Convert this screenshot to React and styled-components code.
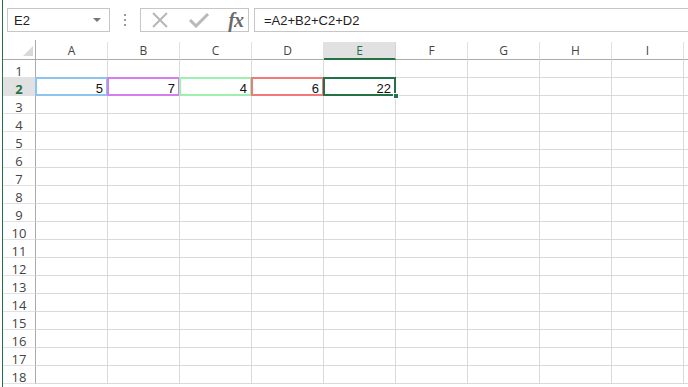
import React from 'react';
import styled, { createGlobalStyle } from 'styled-components';

const GlobalStyle = createGlobalStyle`
  html, body {
    margin: 0;
    padding: 0;
    background: #ffffff;
    overflow: hidden;
  }
  * {
    box-sizing: border-box;
  }
`;

// last column is only partly visible, so its letter stays hidden
const COLS = ['A', 'B', 'C', 'D', 'E', 'F', 'G', 'H', 'I', ''];
const ROWS = Array.from({ length: 18 }, (_, i) => i + 1);

const VALUES = {
  A2: { value: '5', ref: '#8cc4f0' },
  B2: { value: '7', ref: '#d67ef0' },
  C2: { value: '4', ref: '#9ef0ae' },
  D2: { value: '6', ref: '#f07a7a' },
  E2: { value: '22', active: true },
};

const App = () => {
  return (
    <>
      <GlobalStyle />
      <Sheet>
        <FormulaBar>
          <NameBox>
            <span>E2</span>
            <Caret />
          </NameBox>
          <Grip>
            <i />
            <i />
            <i />
          </Grip>
          <ActionBox>
            <svg width="20" height="16" viewBox="0 0 20 16">
              <path d="M3 1 L17 15 M17 1 L3 15" stroke="#b9b9b9" strokeWidth="2.2" fill="none" />
            </svg>
            <svg width="22" height="16" viewBox="0 0 22 16">
              <path d="M2 8 L8 14 L20 2" stroke="#b9b9b9" strokeWidth="3" fill="none" />
            </svg>
            <Fx>fx</Fx>
          </ActionBox>
          <FormulaInput>=A2+B2+C2+D2</FormulaInput>
        </FormulaBar>

        <Grid>
          <Corner>
            <svg width="10" height="10" viewBox="0 0 10 10">
              <polygon points="10,0 10,10 0,10" fill="#d9d9d9" />
            </svg>
          </Corner>
          {COLS.map((c, i) => (
            <ColHead key={i} $active={c === 'E'}>
              {c}
            </ColHead>
          ))}
          {ROWS.map((r) => (
            <React.Fragment key={r}>
              <RowHead $active={r === 2}>{r}</RowHead>
              {COLS.map((c, i) => {
                const cell = c ? VALUES[`${c}${r}`] : null;
                return (
                  <Cell key={i} $ref={cell && cell.ref} $active={cell && cell.active}>
                    {cell ? cell.value : ''}
                    {cell && cell.active && <FillHandle />}
                  </Cell>
                );
              })}
            </React.Fragment>
          ))}
        </Grid>
      </Sheet>
    </>
  );
};

const Sheet = styled.div`
  width: 688px;
  height: 387px;
  margin-left: 2px;
  border-left: 1px solid #217346;
  overflow: hidden;
  font-family: 'Liberation Sans', Arial, sans-serif;
`;

const FormulaBar = styled.div`
  display: flex;
  align-items: flex-start;
  height: 40px;
  padding: 8px 0 0 4px;
`;

const NameBox = styled.div`
  width: 103px;
  height: 24px;
  border: 1px solid #c6c6c6;
  display: flex;
  align-items: center;
  justify-content: space-between;
  padding: 0 8px 0 6px;
  font-size: 13px;
  color: #222;
`;

const Caret = styled.span`
  width: 0;
  height: 0;
  border-left: 4px solid transparent;
  border-right: 4px solid transparent;
  border-top: 4px solid #777;
`;

const Grip = styled.div`
  width: 30px;
  height: 24px;
  display: flex;
  flex-direction: column;
  align-items: center;
  justify-content: center;
  gap: 3px;
  i {
    width: 2px;
    height: 2px;
    background: #9a9a9a;
  }
`;

const ActionBox = styled.div`
  width: 109px;
  height: 24px;
  border: 1px solid #c6c6c6;
  display: flex;
  align-items: center;
  justify-content: space-between;
  padding: 0 5px 0 9px;
`;

const Fx = styled.span`
  font-family: 'Liberation Serif', 'Times New Roman', serif;
  font-style: italic;
  font-weight: 700;
  font-size: 20px;
  color: #6a6a6a;
  letter-spacing: -1px;
  line-height: 1;
`;

const FormulaInput = styled.div`
  flex: 1;
  margin-left: 5px;
  height: 24px;
  border: 1px solid #c6c6c6;
  border-right: none;
  display: flex;
  align-items: center;
  padding-left: 9px;
  font-size: 13px;
  color: #222;
`;

const Grid = styled.div`
  display: grid;
  grid-template-columns: 33px repeat(10, 72px);
  grid-template-rows: 20px repeat(18, 18px);
`;

const Corner = styled.div`
  border-right: 1px solid #ababab;
  border-bottom: 1px solid #ababab;
  display: flex;
  align-items: flex-end;
  justify-content: flex-end;
  padding: 0 2px 3px 0;
`;

const ColHead = styled.div`
  display: flex;
  align-items: center;
  justify-content: center;
  font-family: 'Open Sans', 'Liberation Sans', sans-serif;
  font-size: 12px;
  color: ${(p) => (p.$active ? '#217346' : '#444')};
  background: ${(p) => (p.$active ? '#e1e1e1' : '#fff')};
  border-right: 1px solid ${(p) => (p.$active ? '#d4d4d4' : '#e1e1e1')};
  border-bottom: ${(p) => (p.$active ? '2px solid #217346' : '1px solid #ababab')};
  margin-top: 2px;
`;

const RowHead = styled.div`
  display: flex;
  align-items: center;
  justify-content: center;
  padding-top: 4px;
  font-family: 'Open Sans', 'Liberation Sans', sans-serif;
  font-size: 13px;
  font-weight: ${(p) => (p.$active ? 700 : 400)};
  color: ${(p) => (p.$active ? '#217346' : '#444')};
  background: ${(p) => (p.$active ? '#e1e1e1' : '#fff')};
  border-right: 1px solid #ababab;
  border-bottom: 1px solid #e1e1e1;
`;

const Cell = styled.div`
  position: relative;
  display: flex;
  align-items: center;
  justify-content: flex-end;
  padding: 3px 4px 0 0;
  font-size: 13px;
  color: #111;
  border-right: 1px solid #d9d9d9;
  border-bottom: 1px solid #d9d9d9;

  ${(p) =>
    (p.$ref || p.$active) &&
    `
    &::after {
      content: '';
      position: absolute;
      top: -1px;
      left: -1px;
      right: -1px;
      bottom: -1px;
      border: 2px solid ${p.$active ? '#217346' : p.$ref};
      pointer-events: none;
      z-index: 1;
    }
  `}
`;

const FillHandle = styled.span`
  position: absolute;
  right: -4px;
  bottom: -4px;
  width: 6px;
  height: 6px;
  background: #217346;
  border: 1px solid #fff;
  z-index: 2;
`;

export default App;
